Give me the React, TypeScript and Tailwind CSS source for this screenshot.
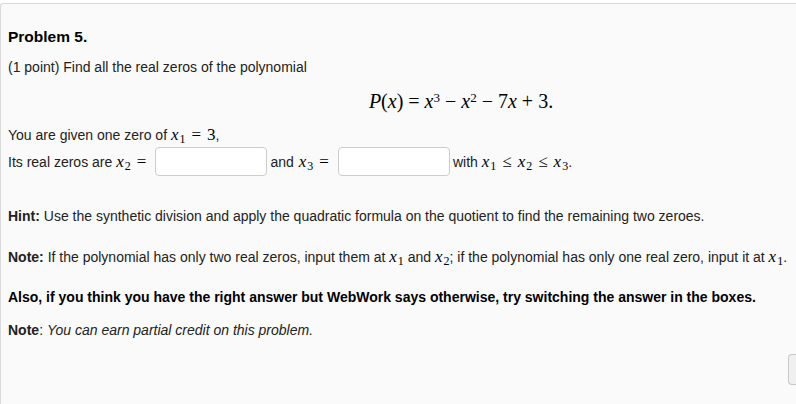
import React from "react";

const M = ({ children }: { children: React.ReactNode }) => (
  <span className="font-['Liberation_Serif','DejaVu_Serif',serif] text-[17px] leading-[20px] text-black">{children}</span>
);

const V = ({ children }: { children: React.ReactNode }) => (
  <span className="italic">{children}</span>
);

const Sub = ({ v, n }: { v: string; n: string }) => (
  <M>
    <V>{v}</V>
    <sub className="pl-[1px] text-[12px] not-italic">{n}</sub>
  </M>
);

const Op = ({ children }: { children: React.ReactNode }) => (
  <span className="px-[5px]">{children}</span>
);

const IOp = ({ children }: { children: React.ReactNode }) => (
  <span className="px-[6px]">{children}</span>
);

const Field = () => (
  <input
    type="text"
    className="mx-[3px] h-[29px] w-[112px] rounded-[4px] border border-[#cccccc] bg-white"
  />
);

export default function App() {
  return (
    <div className="h-[404px] w-[796px] overflow-hidden bg-white pt-[3px] font-['Liberation_Sans',Arial,sans-serif] text-[14px] leading-[20px] text-[#222]">
      <div className="h-[401px] w-[930px] rounded-tl-[3px] border-l border-t border-[#d9d9d9] bg-[#fafafa] pl-[7px]">
        <h2 className="pt-[23px] text-[15.5px] font-bold text-black">Problem 5.</h2>

        <p className="mt-[10px]">(1 point) Find all the real zeros of the polynomial</p>

        <div className="mt-[14px] w-[906px] text-center text-[20px] text-black">
          <span className="font-['Liberation_Serif','DejaVu_Serif',serif]">
            <V>P</V>(<V>x</V>)<Op>=</Op>
            <V>x</V>
            <sup className="text-[13px]">3</sup>
            <Op>−</Op>
            <V>x</V>
            <sup className="text-[13px]">2</sup>
            <Op>−</Op>7<V>x</V>
            <Op>+</Op>3.
          </span>
        </div>

        <p className="mt-[14px]">
          You are given one zero of <Sub v="x" n="1" />
          <M>
            <IOp>=</IOp>3
          </M>
          ,
        </p>

        <div className="mt-[2px] flex h-[29px] items-center">
          <span>Its real zeros are </span>
          <span className="ml-[4px]">
            <Sub v="x" n="2" />
            <M>
              <IOp>=</IOp>
            </M>
          </span>
          <Field />
          <span>and </span>
          <span className="ml-[5px]">
            <Sub v="x" n="3" />
            <M>
              <IOp>=</IOp>
            </M>
          </span>
          <Field />
          <span className="mr-[4px]">with</span>
          <Sub v="x" n="1" />
          <M>
            <IOp>≤</IOp>
          </M>
          <Sub v="x" n="2" />
          <M>
            <IOp>≤</IOp>
          </M>
          <Sub v="x" n="3" />
          <span>.</span>
        </div>

        <p className="mt-[30px]">
          <b>Hint:</b> Use the synthetic division and apply the quadratic formula on the quotient to find the remaining
          two zeroes.
        </p>

        <p className="mt-[21px] whitespace-nowrap">
          <b>Note:</b> If the polynomial has only two real zeros, input them at <Sub v="x" n="1" /> and{" "}
          <Sub v="x" n="2" />; if the polynomial has only one real zero, input it at <Sub v="x" n="1" />.
        </p>

        <p className="mt-[20px] font-bold text-black">
          Also, if you think you have the right answer but WebWork says otherwise, try switching the answer in the
          boxes.
        </p>

        <p className="mt-[13px]">
          <b>Note</b>: <i>You can earn partial credit on this problem.</i>
        </p>

        <div className="mt-[14px] flex w-[788px] justify-end">
          <div className="h-[31px] w-[8px] rounded-l-[4px] border border-r-0 border-[#c8c8c8] bg-[#f0f0f0]" />
        </div>
      </div>
    </div>
  );
}
